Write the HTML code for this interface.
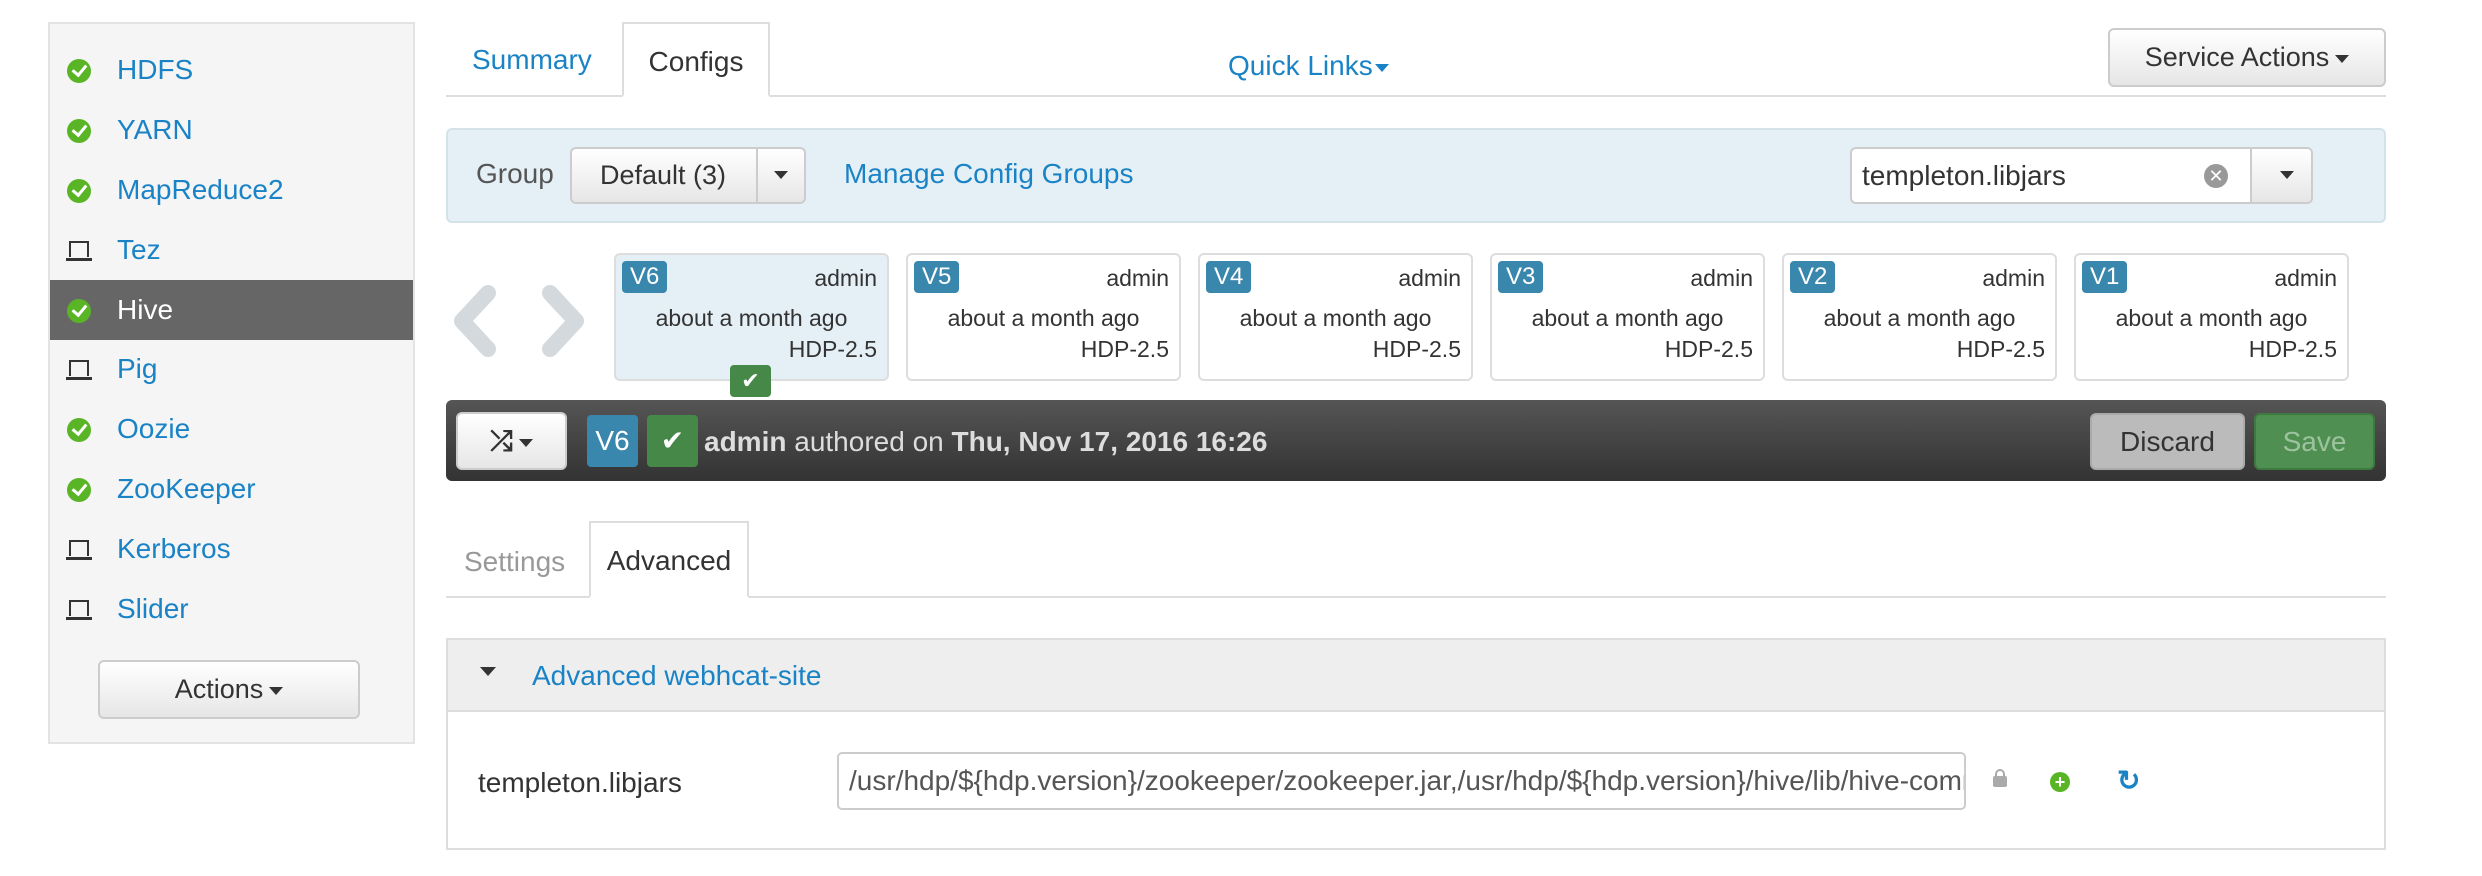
<!DOCTYPE html><html><head><style>
*{box-sizing:border-box}body{margin:0;width:2482px;height:876px;background:#fff;font-family:"Liberation Sans",sans-serif;position:relative;overflow:hidden;color:#333}
.a{position:absolute}
a,.lk{color:#1a83c6}
.side{left:48px;top:22px;width:367px;height:722px;background:#f5f5f5;border:2px solid #e3e3e3}
.it{position:absolute;left:0;width:363px;height:58px;font-size:28px;line-height:58px;padding-left:67px;color:#1a83c6}
.ok{position:absolute;left:17px;top:18px;width:24px;height:24px;border-radius:50%;background:#5ab526}
.ok:after{content:"";position:absolute;left:8px;top:3px;width:6px;height:11px;border:solid #fff;border-width:0 3px 3px 0;transform:rotate(40deg)}
.lap{position:absolute;left:19px;top:20px;width:20px;height:16px;border:2px solid #333;border-bottom:none}
.lap:after{content:"";position:absolute;left:-5px;top:15px;width:26px;height:3px;background:#333}
.btn{position:absolute;background:linear-gradient(#fff,#e6e6e6);border:2px solid #ccc;border-radius:6px;font-size:27px;color:#333;text-align:center}
.car{display:inline-block;width:0;height:0;border-left:7px solid transparent;border-right:7px solid transparent;border-top:8px solid #333;vertical-align:middle;margin-left:6px}
.card{position:absolute;top:253px;width:275px;height:128px;border:2px solid #ddd;border-radius:6px;background:#fff;font-size:23px}
.card .v{position:absolute;left:6px;top:6px;background:#3a87ad;color:#fff;padding:2px 8px;border-radius:4px;font-size:24px}
.card .u{position:absolute;right:10px;top:10px}
.card .t{position:absolute;left:0;right:0;top:50px;text-align:center}
.card .h{position:absolute;right:10px;top:81px}
</style></head><body>
<div class="a side">
<div class="it" style="top:17px"><span class="ok"></span>HDFS</div>
<div class="it" style="top:77px"><span class="ok"></span>YARN</div>
<div class="it" style="top:137px"><span class="ok"></span>MapReduce2</div>
<div class="it" style="top:197px"><span class="lap"></span>Tez</div>
<div class="it" style="top:256px;height:60px;line-height:60px;background:#666;color:#fff"><span class="ok" style="top:19px"></span>Hive</div>
<div class="it" style="top:316px"><span class="lap"></span>Pig</div>
<div class="it" style="top:376px"><span class="ok"></span>Oozie</div>
<div class="it" style="top:436px"><span class="ok"></span>ZooKeeper</div>
<div class="it" style="top:496px"><span class="lap"></span>Kerberos</div>
<div class="it" style="top:556px"><span class="lap"></span>Slider</div>
<div class="btn" style="left:48px;top:636px;width:262px;height:59px;line-height:55px">Actions<span class="car"></span></div>
</div>
<div class="a" style="left:446px;top:95px;width:1940px;height:2px;background:#ddd"></div>
<div class="a lk" style="left:472px;top:44px;font-size:28px">Summary</div>
<div class="a" style="left:622px;top:22px;width:148px;height:75px;border:2px solid #ddd;border-bottom:2px solid #fff;background:#fff;font-size:28px;text-align:center;line-height:75px">Configs</div>
<div class="a lk" style="left:1228px;top:50px;font-size:28px">Quick Links<span class="car" style="border-top-color:#1a83c6;margin-left:2px"></span></div>
<div class="btn" style="left:2108px;top:28px;width:278px;height:59px;line-height:55px">Service Actions<span class="car"></span></div>
<div class="a" style="left:446px;top:128px;width:1940px;height:95px;background:#e4f0f6;border:2px solid #d4e2ea;border-radius:6px"></div>
<div class="a" style="left:476px;top:158px;font-size:28px;color:#555">Group</div>
<div class="btn" style="left:570px;top:147px;width:236px;height:57px;line-height:53px;text-align:left;padding-left:28px">Default (3)<span style="position:absolute;left:184px;top:0;bottom:0;border-left:2px solid #ccc"></span><span class="car" style="position:absolute;left:196px;top:22px"></span></div>
<div class="a lk" style="left:844px;top:158px;font-size:28px">Manage Config Groups</div>
<div class="a" style="left:1850px;top:147px;width:463px;height:57px;border:2px solid #ccc;border-radius:6px;background:#fff;font-size:28px;line-height:53px;padding-left:10px;overflow:hidden">templeton.libjars<span style="position:absolute;left:352px;top:15px;width:24px;height:24px;border-radius:50%;background:#999;color:#fff;font-size:18px;line-height:24px;text-align:center">✕</span><span style="position:absolute;left:398px;top:0;bottom:0;right:0;border-left:2px solid #ccc;background:linear-gradient(#fff,#e6e6e6)"><span class="car" style="position:absolute;left:22px;top:22px"></span></span></div>
<svg class="a" style="left:448px;top:285px" width="141" height="72"><path d="M40 8 L14 36 L40 64 M102 8 L128 36 L102 64" fill="none" stroke="#d3d9dd" stroke-width="16" stroke-linecap="round" stroke-linejoin="round"/></svg>
<div class="card" style="left:614px;background:#e4f0f6"><span class="v">V6</span><span class="u">admin</span><div class="t">about a month ago</div><span class="h">HDP-2.5</span></div>
<div class="a" style="left:730px;top:365px;width:41px;height:32px;background:#468847;border-radius:4px;color:#fff;text-align:center;font-size:22px;line-height:32px">✔</div>
<div class="card" style="left:906px"><span class="v">V5</span><span class="u">admin</span><div class="t">about a month ago</div><span class="h">HDP-2.5</span></div>
<div class="card" style="left:1198px"><span class="v">V4</span><span class="u">admin</span><div class="t">about a month ago</div><span class="h">HDP-2.5</span></div>
<div class="card" style="left:1490px"><span class="v">V3</span><span class="u">admin</span><div class="t">about a month ago</div><span class="h">HDP-2.5</span></div>
<div class="card" style="left:1782px"><span class="v">V2</span><span class="u">admin</span><div class="t">about a month ago</div><span class="h">HDP-2.5</span></div>
<div class="card" style="left:2074px"><span class="v">V1</span><span class="u">admin</span><div class="t">about a month ago</div><span class="h">HDP-2.5</span></div>
<div class="a" style="left:446px;top:400px;width:1940px;height:81px;background:linear-gradient(#555,#333);border-radius:6px"></div>
<div class="btn" style="left:456px;top:412px;width:111px;height:58px;line-height:54px;font-size:28px;font-weight:bold">⤮<span class="car"></span></div>
<div class="a" style="left:587px;top:415px;width:51px;height:52px;background:#3a87ad;border-radius:4px;color:#fff;font-size:28px;line-height:52px;text-align:center">V6</div>
<div class="a" style="left:647px;top:415px;width:51px;height:52px;background:#468847;border-radius:4px;color:#fff;font-size:28px;line-height:52px;text-align:center">✔</div>
<div class="a" style="left:704px;top:426px;font-size:28px;color:#ddd"><b>admin</b> authored on <b>Thu, Nov 17, 2016 16:26</b></div>
<div class="a" style="left:2090px;top:413px;width:155px;height:57px;background:#bbb;border:2px solid #aaa;border-radius:6px;font-size:28px;line-height:53px;text-align:center;color:#333">Discard</div>
<div class="a" style="left:2254px;top:413px;width:121px;height:57px;background:#4f8f52;border:2px solid #3e7a40;border-radius:6px;font-size:28px;line-height:53px;text-align:center;color:#9dc39e">Save</div>
<div class="a" style="left:446px;top:596px;width:1940px;height:2px;background:#ddd"></div>
<div class="a" style="left:464px;top:546px;font-size:28px;color:#999">Settings</div>
<div class="a" style="left:589px;top:521px;width:160px;height:77px;border:2px solid #ddd;border-bottom:2px solid #fff;background:#fff;font-size:28px;text-align:center;line-height:75px">Advanced</div>
<div class="a" style="left:446px;top:638px;width:1940px;height:212px;border:2px solid #ddd"></div>
<div class="a" style="left:448px;top:640px;width:1936px;height:72px;background:#eee;border-bottom:2px solid #ddd"></div>
<div class="a" style="left:480px;top:667px;border-left:8px solid transparent;border-right:8px solid transparent;border-top:9px solid #333"></div>
<div class="a lk" style="left:532px;top:660px;font-size:28px">Advanced webhcat-site</div>
<div class="a" style="left:478px;top:767px;font-size:28px">templeton.libjars</div>
<div class="a" style="left:837px;top:752px;width:1129px;height:58px;border:2px solid #ccc;border-radius:5px;font-size:28px;line-height:54px;padding-left:10px;overflow:hidden;white-space:nowrap;color:#555">/usr/hdp/${hdp.version}/zookeeper/zookeeper.jar,/usr/hdp/${hdp.version}/hive/lib/hive-common.jar</div>
<div class="a" style="left:1993px;top:776px;width:14px;height:11px;background:#aaa;border-radius:2px"></div>
<div class="a" style="left:1995px;top:769px;width:10px;height:10px;border:2px solid #aaa;border-radius:5px 5px 0 0"></div>
<div class="a" style="left:2050px;top:772px;width:20px;height:20px;border-radius:50%;background:#5ab526;color:#fff;font-size:18px;line-height:20px;text-align:center;font-weight:bold">+</div>
<div class="a" style="left:2117px;top:764px;font-size:28px;color:#1a83c6;font-weight:bold">↻</div>
</body></html>
